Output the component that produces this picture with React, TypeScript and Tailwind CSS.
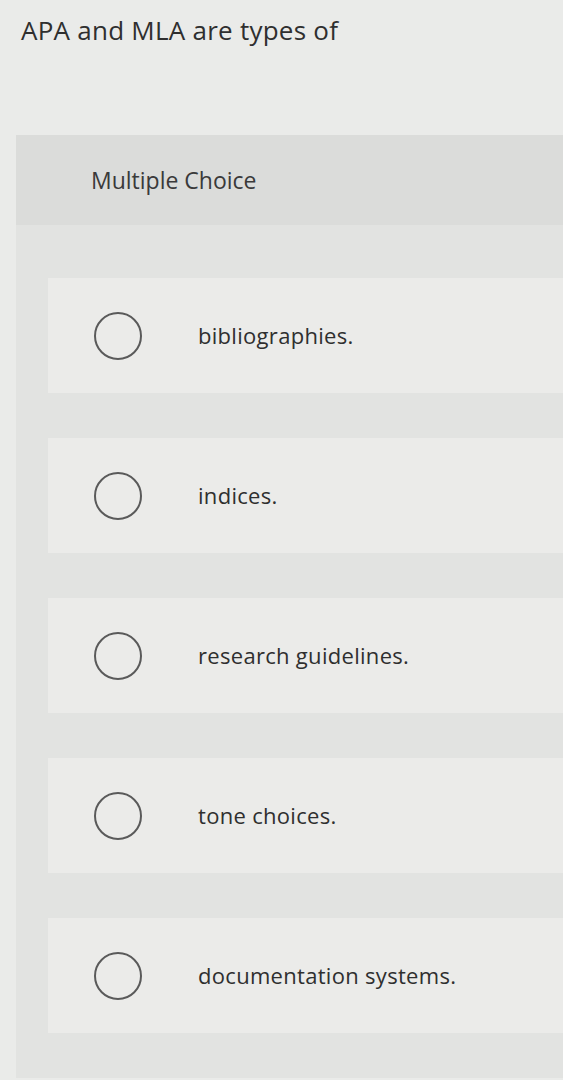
import React from 'react';

const options = [
  'bibliographies.',
  'indices.',
  'research guidelines.',
  'tone choices.',
  'documentation systems.',
];

const App: React.FC = () => {
  return (
    <div
      className="min-h-[1080px] w-full overflow-hidden bg-[#eaebe9] text-[#2f2f2f]"
      style={{ fontFamily: '"Open Sans", Arial, sans-serif' }}
    >
      <div className="px-[21px] pt-[12px]">
        <h1 className="text-[26px] leading-[36px] font-normal tracking-[0.25px]">APA and MLA are types of</h1>
      </div>

      <div className="ml-[16px] mt-[87px] bg-[#e2e3e1]">
        <div className="flex h-[90px] items-center bg-[#dbdcda] pl-[75px]">
          <span className="text-[23px] text-[#3a3a3a]">Multiple Choice</span>
        </div>

        <div className="flex flex-col gap-[45px] pt-[53px] pb-[45px] pl-[32px]">
          {options.map((opt) => (
            <div key={opt} className="flex h-[115px] items-center bg-[#ebebe9]">
              <div className="ml-[46px] h-[48px] w-[48px] shrink-0 rounded-full border-2 border-[#5a5a5a]" />
              <span className="ml-[56px] text-[22px] text-[#2f2f2f] tracking-[0.3px]">{opt}</span>
            </div>
          ))}
        </div>
      </div>
    </div>
  );
};

export default App;
